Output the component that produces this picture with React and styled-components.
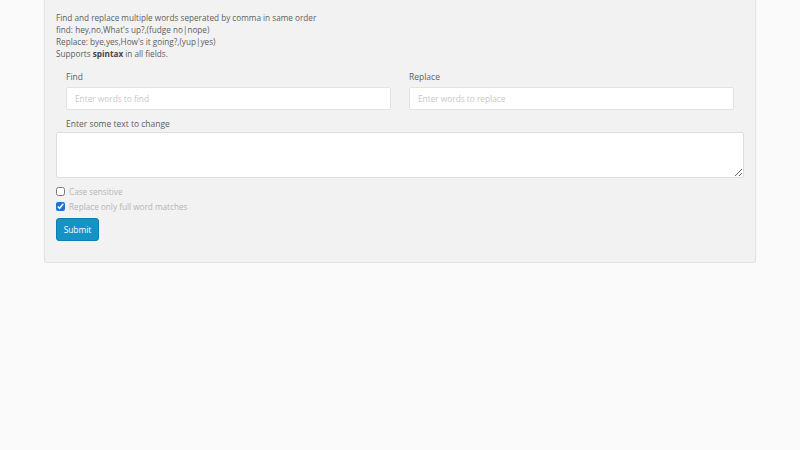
import React from "react";
import styled, { createGlobalStyle } from "styled-components";

const GlobalStyle = createGlobalStyle`
  html, body {
    margin: 0;
    padding: 0;
    background: #fafafa;
    font-family: "Open Sans", "Liberation Sans", sans-serif;
  }
`;

const Page = styled.div`
  padding: 0 44px;
`;

const Panel = styled.div`
  background: #f2f2f2;
  border: 1px solid #e3e3e3;
  border-top: none;
  border-radius: 0 0 3px 3px;
  padding: 12px 11px 21px 11px;
  color: #555;
`;

const Intro = styled.div`
  font-size: 8.2px;
  line-height: 12px;
  color: #5e5e5e;

  b {
    color: #444;
  }
`;

const FieldRow = styled.div`
  display: grid;
  grid-template-columns: 1fr 1fr;
  column-gap: 18px;
  padding: 0 10px;
  margin-top: 11px;
`;

const Field = styled.div`
  display: flex;
  flex-direction: column;
`;

const Label = styled.label`
  font-size: 8.5px;
  line-height: 12px;
  color: #5e5e5e;
  margin-bottom: 4px;
`;

const TextInput = styled.input`
  box-sizing: border-box;
  height: 23px;
  border: 1px solid #e3e3e3;
  border-radius: 2px;
  background: #fff;
  padding: 0 8px;
  font-family: inherit;
  font-size: 8.3px;
  outline: none;

  &::placeholder {
    color: #c8c8c8;
  }
`;

const AreaLabel = styled(Label)`
  padding-left: 10px;
  margin-top: 11px;
`;

const TextArea = styled.textarea`
  display: block;
  box-sizing: border-box;
  width: 100%;
  height: 46px;
  border: 1px solid #ddd;
  border-radius: 2px;
  background: #fff;
  resize: vertical;
  outline: none;
  font-family: inherit;
`;

const Checks = styled.div`
  display: flex;
  flex-direction: column;
  gap: 4px;
  margin-top: 8px;
`;

const CheckLine = styled.label`
  display: flex;
  align-items: center;
  gap: 4px;
  font-size: 8.2px;
  line-height: 11px;
  color: #b5b5b5;

  input {
    margin: 0;
    width: 9px;
    height: 9px;
    accent-color: #1a73d9;
  }
`;

const SubmitButton = styled.button`
  margin-top: 6px;
  width: 43px;
  height: 23px;
  background: #1592c6;
  border: 1px solid #0e7fae;
  border-radius: 3px;
  color: #fff;
  font-family: inherit;
  font-size: 8.4px;
  padding: 0;
`;

export default function App() {
  return (
    <>
      <GlobalStyle />
      <Page>
        <Panel>
          <Intro>
            Find and replace multiple words seperated by comma in same order
            <br />
            find: hey,no,What's up?,(fudge no|nope)
            <br />
            Replace: bye,yes,How's it going?,(yup|yes)
            <br />
            Supports <b>spintax</b> in all fields.
          </Intro>
          <FieldRow>
            <Field>
              <Label>Find</Label>
              <TextInput placeholder="Enter words to find" />
            </Field>
            <Field>
              <Label>Replace</Label>
              <TextInput placeholder="Enter words to replace" />
            </Field>
          </FieldRow>
          <AreaLabel>Enter some text to change</AreaLabel>
          <TextArea />
          <Checks>
            <CheckLine>
              <input type="checkbox" />
              Case sensitive
            </CheckLine>
            <CheckLine>
              <input type="checkbox" defaultChecked />
              Replace only full word matches
            </CheckLine>
          </Checks>
          <SubmitButton>Submit</SubmitButton>
        </Panel>
      </Page>
    </>
  );
}
